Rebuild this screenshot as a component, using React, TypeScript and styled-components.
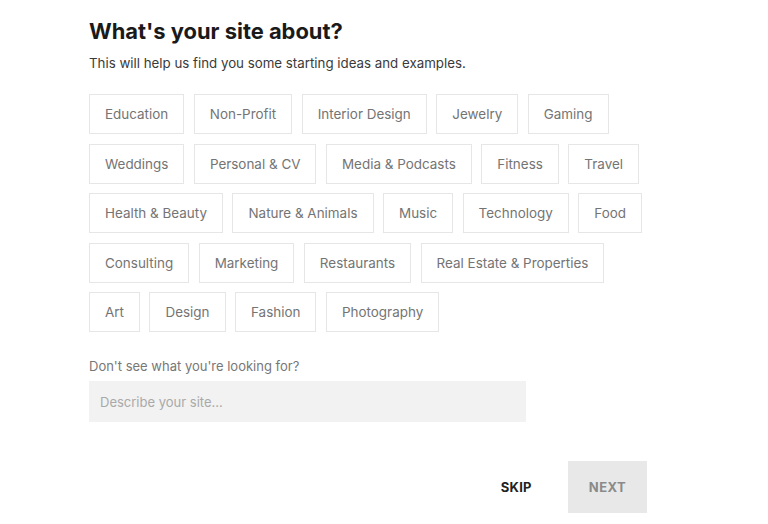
import React from 'react';
import styled, { createGlobalStyle } from 'styled-components';

const GlobalStyle = createGlobalStyle`
  html, body {
    margin: 0;
    padding: 0;
    background: #ffffff;
  }
  body {
    font-family: Inter, "Liberation Sans", Arial, sans-serif;
    -webkit-font-smoothing: antialiased;
  }
`;

const Page = styled.div`
  width: 558px;
  padding: 17px 0 0 89px;
`;

const Title = styled.h1`
  margin: 0;
  font-size: 21.9px;
  line-height: 28px;
  font-weight: 700;
  color: #1a1a1a;
`;

const Subtitle = styled.p`
  margin: 9px 0 0;
  font-size: 13.3px;
  line-height: 18px;
  color: #3a3a3a;
`;

const Categories = styled.div`
  display: flex;
  flex-direction: column;
  gap: 9.5px;
  margin-top: 22px;
`;

const CategoryRow = styled.div`
  display: flex;
  gap: 9.5px;
`;

const Chip = styled.button<{ $selected?: boolean }>`
  height: 40px;
  padding: 0 15px;
  border: 1px solid ${(p) => (p.$selected ? '#1a1a1a' : '#e6e6e6')};
  background: #ffffff;
  font-family: inherit;
  font-size: 13.45px;
  color: #747474;
  cursor: pointer;
  white-space: nowrap;
`;

const Label = styled.div`
  margin-top: 25px;
  font-size: 13px;
  line-height: 18px;
  color: #777777;
`;

const DescribeInput = styled.input`
  display: block;
  box-sizing: border-box;
  width: 437px;
  height: 41px;
  margin-top: 6px;
  padding: 0 11px;
  border: none;
  outline: none;
  background: #f2f2f2;
  font-family: inherit;
  font-size: 13px;
  color: #333333;

  &::placeholder {
    color: #a9a9a9;
  }
`;

const Footer = styled.div`
  display: flex;
  justify-content: flex-end;
  align-items: center;
  gap: 18px;
  margin-top: 39px;
`;

const TextButton = styled.button`
  height: 52px;
  padding: 0 18px;
  border: none;
  background: transparent;
  font-family: inherit;
  font-size: 13px;
  font-weight: 700;
  letter-spacing: 0.3px;
  color: #222222;
  cursor: pointer;
`;

const NextButton = styled.button<{ $disabled?: boolean }>`
  height: 52px;
  padding: 0 21px;
  border: none;
  background: ${(p) => (p.$disabled ? '#e8e8e8' : '#1a1a1a')};
  font-family: inherit;
  font-size: 13px;
  font-weight: 700;
  letter-spacing: 0.4px;
  color: ${(p) => (p.$disabled ? '#8a8a8a' : '#ffffff')};
  cursor: pointer;
`;

const rows: string[][] = [
  ['Education', 'Non-Profit', 'Interior Design', 'Jewelry', 'Gaming'],
  ['Weddings', 'Personal & CV', 'Media & Podcasts', 'Fitness', 'Travel'],
  ['Health & Beauty', 'Nature & Animals', 'Music', 'Technology', 'Food'],
  ['Consulting', 'Marketing', 'Restaurants', 'Real Estate & Properties'],
  ['Art', 'Design', 'Fashion', 'Photography'],
];

export default function App() {
  const [selected, setSelected] = React.useState<string | null>(null);
  const [text, setText] = React.useState('');

  return (
    <>
      <GlobalStyle />
      <Page>
        <Title>What's your site about?</Title>
        <Subtitle>This will help us find you some starting ideas and examples.</Subtitle>
        <Categories>
          {rows.map((row, i) => (
            <CategoryRow key={i}>
              {row.map((name) => (
                <Chip
                  key={name}
                  $selected={selected === name}
                  onClick={() => setSelected(selected === name ? null : name)}
                >
                  {name}
                </Chip>
              ))}
            </CategoryRow>
          ))}
        </Categories>
        <Label>Don't see what you're looking for?</Label>
        <DescribeInput
          placeholder="Describe your site..."
          value={text}
          onChange={(e) => setText(e.target.value)}
        />
        <Footer>
          <TextButton>SKIP</TextButton>
          <NextButton $disabled={!selected && !text}>NEXT</NextButton>
        </Footer>
      </Page>
    </>
  );
}
